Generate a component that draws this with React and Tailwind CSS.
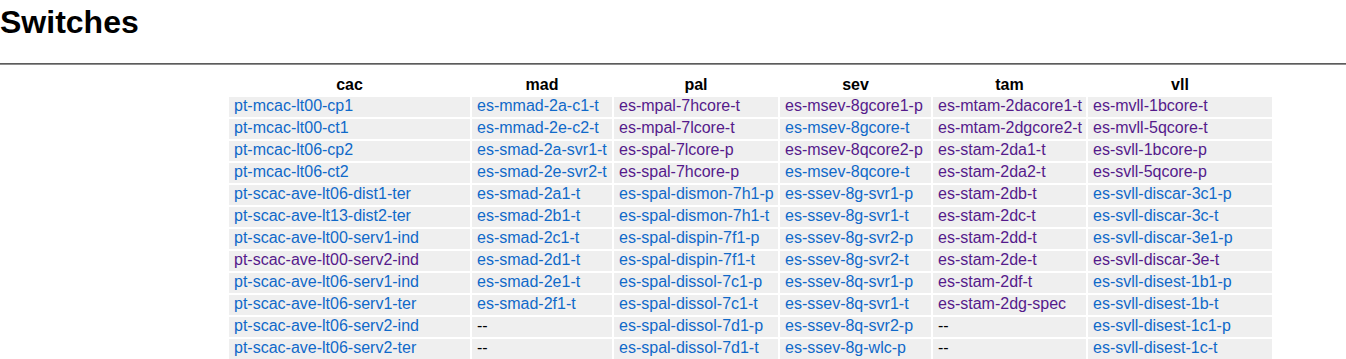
import React from "react";

const B = "b";
const P = "p";

const headers = ["cac", "mad", "pal", "sev", "tam", "vll"];

const rows = [
  [["pt-mcac-lt00-cp1", B], ["es-mmad-2a-c1-t", B], ["es-mpal-7hcore-t", P], ["es-msev-8gcore1-p", P], ["es-mtam-2dacore1-t", P], ["es-mvll-1bcore-t", P]],
  [["pt-mcac-lt00-ct1", B], ["es-mmad-2e-c2-t", B], ["es-mpal-7lcore-t", P], ["es-msev-8gcore-t", B], ["es-mtam-2dgcore2-t", P], ["es-mvll-5qcore-t", P]],
  [["pt-mcac-lt06-cp2", B], ["es-smad-2a-svr1-t", B], ["es-spal-7lcore-p", P], ["es-msev-8qcore2-p", P], ["es-stam-2da1-t", P], ["es-svll-1bcore-p", P]],
  [["pt-mcac-lt06-ct2", B], ["es-smad-2e-svr2-t", B], ["es-spal-7hcore-p", P], ["es-msev-8qcore-t", B], ["es-stam-2da2-t", P], ["es-svll-5qcore-p", P]],
  [["pt-scac-ave-lt06-dist1-ter", B], ["es-smad-2a1-t", B], ["es-spal-dismon-7h1-p", B], ["es-ssev-8g-svr1-p", B], ["es-stam-2db-t", P], ["es-svll-discar-3c1-p", B]],
  [["pt-scac-ave-lt13-dist2-ter", B], ["es-smad-2b1-t", B], ["es-spal-dismon-7h1-t", B], ["es-ssev-8g-svr1-t", B], ["es-stam-2dc-t", P], ["es-svll-discar-3c-t", B]],
  [["pt-scac-ave-lt00-serv1-ind", B], ["es-smad-2c1-t", B], ["es-spal-dispin-7f1-p", B], ["es-ssev-8g-svr2-p", B], ["es-stam-2dd-t", P], ["es-svll-discar-3e1-p", B]],
  [["pt-scac-ave-lt00-serv2-ind", P], ["es-smad-2d1-t", B], ["es-spal-dispin-7f1-t", B], ["es-ssev-8g-svr2-t", B], ["es-stam-2de-t", P], ["es-svll-discar-3e-t", P]],
  [["pt-scac-ave-lt06-serv1-ind", B], ["es-smad-2e1-t", B], ["es-spal-dissol-7c1-p", B], ["es-ssev-8q-svr1-p", B], ["es-stam-2df-t", P], ["es-svll-disest-1b1-p", B]],
  [["pt-scac-ave-lt06-serv1-ter", B], ["es-smad-2f1-t", B], ["es-spal-dissol-7c1-t", B], ["es-ssev-8q-svr1-t", B], ["es-stam-2dg-spec", P], ["es-svll-disest-1b-t", B]],
  [["pt-scac-ave-lt06-serv2-ind", B], ["--", null], ["es-spal-dissol-7d1-p", B], ["es-ssev-8q-svr2-p", B], ["--", null], ["es-svll-disest-1c1-p", B]],
  [["pt-scac-ave-lt06-serv2-ter", B], ["--", null], ["es-spal-dissol-7d1-t", B], ["es-ssev-8g-wlc-p", B], ["--", null], ["es-svll-disest-1c-t", B]],
];

function Cell({ text, kind }) {
  return (
    <div className="h-[20px] bg-[#efefef] pl-[5px] pr-1 text-[16px] leading-[18px] whitespace-nowrap overflow-hidden">
      {kind === null ? (
        <span className="text-black">{text}</span>
      ) : (
        <a
          href="#"
          className={kind === P ? "text-[#551a8b] no-underline" : "text-[#0f69c9] no-underline"}
        >
          {text}
        </a>
      )}
    </div>
  );
}

export default function App() {
  return (
    <div className="bg-white text-black font-['Liberation_Sans',Arial,sans-serif] min-h-[359px]">
      <h1 className="pt-[4px] text-[32px] font-bold leading-[36px]">Switches</h1>
      <div className="mt-[23px] h-[2px] border-t border-t-[#5c5c5c] border-b border-b-[#8e8e8e]"></div>
      <div className="mt-[10px] ml-[229px] grid grid-cols-[241px_140px_164px_151px_153px_184px] gap-[2px] w-max">
        {headers.map((h) => (
          <div key={h} className="h-[20px] text-center text-[16px] font-bold leading-[20px]">
            {h}
          </div>
        ))}
        {rows.map((r, i) =>
          r.map(([t, k], j) => <Cell key={i + "-" + j} text={t} kind={k} />)
        )}
      </div>
    </div>
  );
}
